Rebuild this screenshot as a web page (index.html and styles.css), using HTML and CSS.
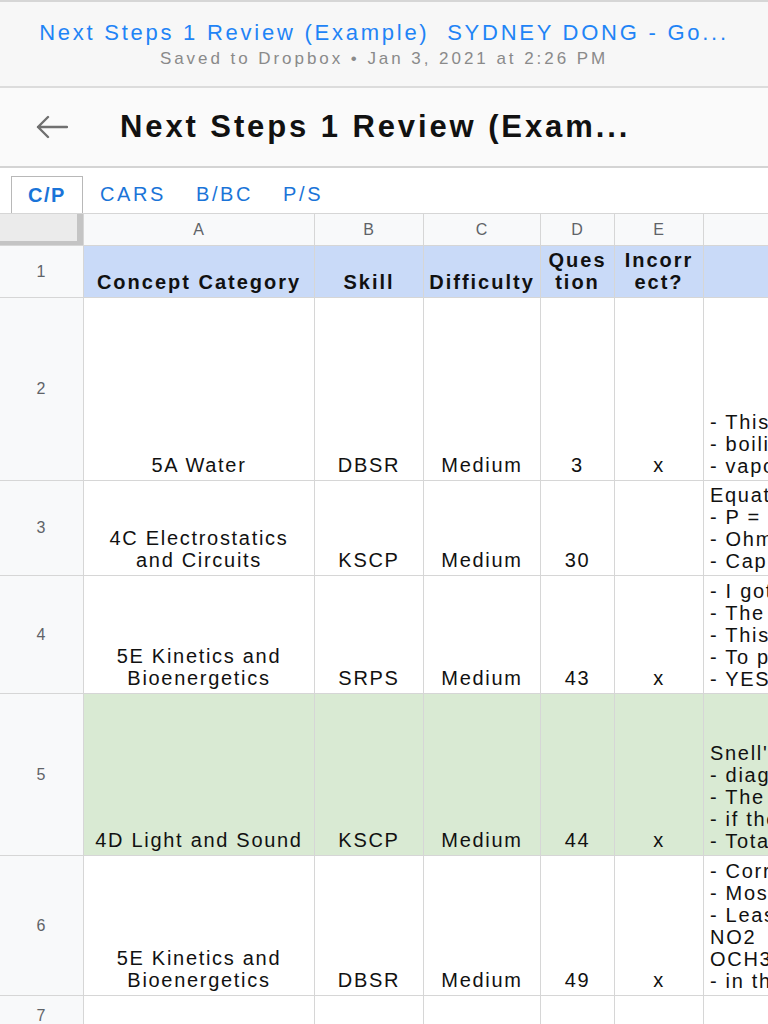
FILE: index.html
```html
<!DOCTYPE html>
<html lang="en">
<head>
  <meta charset="UTF-8">
  <meta name="viewport" content="width=device-width, initial-scale=1.0">
  <title>Next Steps 1 Review (Example)</title>
  <link rel="stylesheet" href="styles.css">
</head>
<body>
  <div class="top-bar">
    <div class="doc-name">Next Steps 1 Review (Example)&nbsp; SYDNEY DONG - Go...</div>
    <div class="saved">Saved to Dropbox • Jan 3, 2021 at 2:26 PM</div>
  </div>

  <div class="title-bar">
    <button class="back">
      <svg width="32" height="24" viewBox="0 0 32 24"><path d="M31 12H2M12 2L2 12l10 10" fill="none" stroke="#707070" stroke-width="2.4" stroke-linecap="round" stroke-linejoin="round"/></svg>
    </button>
    <h1>Next Steps 1 Review (Exam...</h1>
  </div>

  <div class="tabs">
    <span class="tab active">C/P</span>
    <span class="tab">CARS</span>
    <span class="tab">B/BC</span>
    <span class="tab">P/S</span>
  </div>

  <div class="sheet-wrap">
    <div class="sheet">
      <div class="corner"></div>
      <div class="col-head">A</div>
      <div class="col-head">B</div>
      <div class="col-head">C</div>
      <div class="col-head">D</div>
      <div class="col-head">E</div>
      <div class="col-head"></div>

      <div class="row-head">1</div>
      <div class="cell hdr">Concept Category</div>
      <div class="cell hdr">Skill</div>
      <div class="cell hdr">Difficulty</div>
      <div class="cell hdr">Ques<br>tion</div>
      <div class="cell hdr">Incorr<br>ect?</div>
      <div class="cell hdr"></div>

      <div class="row-head">2</div>
      <div class="cell">5A Water</div>
      <div class="cell">DBSR</div>
      <div class="cell">Medium</div>
      <div class="cell">3</div>
      <div class="cell">x</div>
      <div class="cell notes">- This<br>- boili<br>- vapo</div>

      <div class="row-head">3</div>
      <div class="cell">4C Electrostatics<br>and Circuits</div>
      <div class="cell">KSCP</div>
      <div class="cell">Medium</div>
      <div class="cell">30</div>
      <div class="cell"></div>
      <div class="cell notes">Equat<br>- P =<br>- Ohm<br>- Cap</div>

      <div class="row-head">4</div>
      <div class="cell">5E Kinetics and<br>Bioenergetics</div>
      <div class="cell">SRPS</div>
      <div class="cell">Medium</div>
      <div class="cell">43</div>
      <div class="cell">x</div>
      <div class="cell notes">- I got<br>- The<br>- This<br>- To p<br>- YES</div>

      <div class="row-head">5</div>
      <div class="cell green">4D Light and Sound</div>
      <div class="cell green">KSCP</div>
      <div class="cell green">Medium</div>
      <div class="cell green">44</div>
      <div class="cell green">x</div>
      <div class="cell notes green">Snell'<br>- diag<br>- The<br>- if the<br>- Tota</div>

      <div class="row-head">6</div>
      <div class="cell">5E Kinetics and<br>Bioenergetics</div>
      <div class="cell">DBSR</div>
      <div class="cell">Medium</div>
      <div class="cell">49</div>
      <div class="cell">x</div>
      <div class="cell notes">- Corr<br>- Mos<br>- Leas<br>NO2<br>OCH3<br>- in th</div>

      <div class="row-head">7</div>
      <div class="cell"></div>
      <div class="cell"></div>
      <div class="cell"></div>
      <div class="cell"></div>
      <div class="cell"></div>
      <div class="cell"></div>
    </div>
  </div>
</body>
</html>
```

FILE: styles.css
```css
* { box-sizing: border-box; }
html, body {
  margin: 0;
  overflow: hidden;
}
body {
  font-family: 'Liberation Sans', Arial, sans-serif;
  background: #fff;
  color: #111;
  width: 768px;
  height: 1024px;
}
.top-bar {
  height: 88px;
  background: #f7f7f7;
  border-top: 2px solid #d6d6d6;
  border-bottom: 2px solid #dcdcdc;
  padding-top: 18px;
  text-align: center;
}
.doc-name {
  font-size: 22px;
  line-height: 26px;
  color: #1f84f6;
  letter-spacing: 2.75px;
  white-space: nowrap;
}
.saved {
  margin-top: 2px;
  font-size: 17px;
  line-height: 22px;
  color: #8a8a8a;
  letter-spacing: 2.95px;
}
.title-bar {
  height: 80px;
  background: #fafafa;
  border-bottom: 2px solid #d4d4d4;
  display: flex;
  align-items: center;
  padding-left: 36px;
}
.back {
  background: none;
  border: none;
  padding: 0;
  width: 84px;
  text-align: left;
  display: flex;
}
.title-bar h1 {
  margin: 0;
  font-size: 31px;
  font-weight: bold;
  letter-spacing: 2.9px;
  color: #111;
}
.tabs {
  display: flex;
  padding: 8px 0 0 11px;
  height: 45px;
}
.tab {
  font-size: 20px;
  line-height: 37px;
  letter-spacing: 2.6px;
  color: #1a74d8;
  padding: 0 15px;
}
.tab.active {
  font-weight: bold;
  letter-spacing: 1.6px;
  border: 1px solid #b8b8b8;
  border-bottom: none;
  background: #fff;
  width: 72px;
  text-align: center;
  padding: 0;
  margin-right: 2px;
}
.sheet-wrap {
  overflow: hidden;
  width: 768px;
}
.sheet {
  display: grid;
  grid-template-columns: 83px 230px 108px 116px 73px 88px 64px;
  grid-template-rows: 31px 51px 182px 94px 117px 161px 139px 40px;
  gap: 1px;
  padding-top: 1px;
  background: #d6d6d6;
}
.corner {
  background: #ebebeb;
  border-right: 6px solid #c4c4c4;
  border-bottom: 4px solid #c4c4c4;
}
.col-head, .row-head {
  background: #f8f9fa;
  color: #5f6368;
  font-size: 16px;
  letter-spacing: 1px;
  display: flex;
  align-items: center;
  justify-content: center;
}
.cell {
  background: #fff;
  font-size: 20px;
  line-height: 22px;
  letter-spacing: 1.7px;
  display: flex;
  align-items: flex-end;
  justify-content: center;
  text-align: center;
  padding: 0 2px 4px;
  white-space: nowrap;
}
.cell.hdr {
  background: #c9daf8;
  font-weight: bold;
  letter-spacing: 2px;
}
.cell.green {
  background: #d9ead3;
}
.cell.notes {
  justify-content: flex-start;
  text-align: left;
  padding-left: 6px;
  padding-bottom: 3px;
}
```
